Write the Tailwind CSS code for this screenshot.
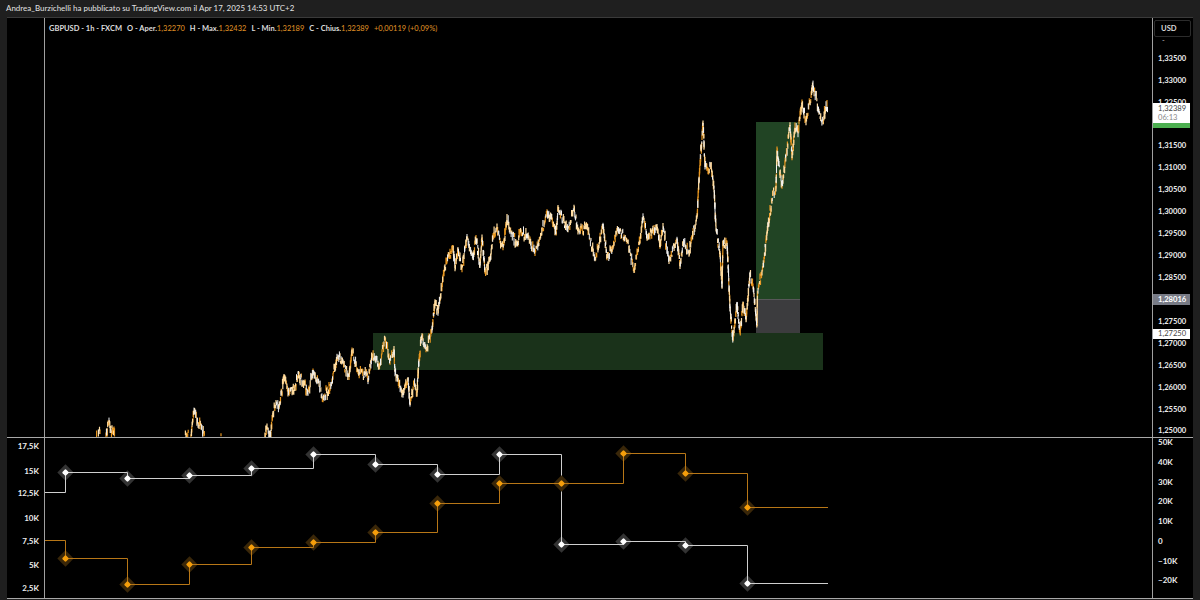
<!DOCTYPE html>
<html lang="en">
<head>
    <meta charset="UTF-8">
    <title>GBPUSD chart</title>
    <script src="https://cdn.jsdelivr.net/npm/@tailwindcss/browser@4"></script>
</head>
<body class="w-[1200px] h-[600px] overflow-hidden bg-[#1f1f1f] font-['Lato',sans-serif] text-[7.6px] text-[#ececec]">
    <!-- publish line -->
    <header class="h-[17px] pl-[6px] flex items-center text-[7.95px] font-medium text-[#dcdcdc]">
        Andrea_Burzichelli ha pubblicato su TradingView.com il Apr 17, 2025 14:53 UTC+2
    </header>

    <main class="mx-[7px] bg-black border-t border-[#3a3a3a]">
        <!-- price pane -->
        <section class="h-[420px] flex border-b border-[#a8a8a8]">
            <div class="w-[38px] border-r border-[#a0a0a0]"></div>
            <div class="relative w-[1107px] h-[419px]">
                <div class="absolute left-[4px] top-[5px] flex gap-[5px] whitespace-nowrap text-[7.5px] font-bold text-[#dcdcdc]">
                    <span>GBPUSD - 1h - FXCM</span>
                    <span>O - Aper.<span class="font-medium text-[#d98a24]">1,32270</span></span>
                    <span>H - Max.<span class="font-medium text-[#d98a24]">1,32432</span></span>
                    <span>L - Min.<span class="font-medium text-[#d98a24]">1,32189</span></span>
                    <span>C - Chius.<span class="font-medium text-[#d98a24]">1,32389</span></span>
                    <span class="font-medium text-[#d98a24]">+0,00119 (+0,09%)</span>
                </div>
                <svg id="priceChart" class="block" width="1107" height="419" viewBox="45 18 1107 419">
                    <rect x="373" y="333" width="450" height="37" fill="#1a321a"></rect>
                    <rect x="756" y="122" width="44" height="177" fill="#214424"></rect>
                    <rect x="756" y="299" width="44" height="34" fill="#3c3c3e"></rect>
                    <rect x="756" y="299" width="44" height="1" fill="#58585a"></rect>
                    <path id="wickOrange" fill="none" stroke="#e8961e" stroke-width="1.2"></path>
                    <path id="wickCream" fill="none" stroke="#ffdca0" stroke-width="1.2"></path>
                    <path id="wickWhite" fill="none" stroke="#f4f4f4" stroke-width="1"></path>
                </svg>
            </div>
            <div class="relative w-[41px] h-[419px] border-l border-[#a0a0a0] overflow-hidden">
                <div class="mt-[2px] ml-[1px] w-[37px] h-[17px] pl-[6px] flex items-center rounded-[2px] border border-[#2c2c2c] text-[#d8d8d8] font-bold">USD</div>
                <div class="h-[10.5px] pl-[9px] leading-[6px] text-[#bbb]">-</div>
                <ul class="pl-[5px] font-bold">
                    <li class="h-[21.93px] flex items-center">1,33500</li>
                    <li class="h-[21.93px] flex items-center">1,33000</li>
                    <li class="h-[21.93px] flex items-center">1,32500</li>
                    <li class="h-[21.93px] flex items-center">1,32000</li>
                    <li class="h-[21.93px] flex items-center">1,31500</li>
                    <li class="h-[21.93px] flex items-center">1,31000</li>
                    <li class="h-[21.93px] flex items-center">1,30500</li>
                    <li class="h-[21.93px] flex items-center">1,30000</li>
                    <li class="h-[21.93px] flex items-center">1,29500</li>
                    <li class="h-[21.93px] flex items-center">1,29000</li>
                    <li class="h-[21.93px] flex items-center">1,28500</li>
                    <li class="h-[21.93px]"></li>
                    <li class="h-[21.93px] flex items-center">1,27500</li>
                    <li class="h-[21.93px] flex items-center">1,27000</li>
                    <li class="h-[21.93px] flex items-center">1,26500</li>
                    <li class="h-[21.93px] flex items-center">1,26000</li>
                    <li class="h-[21.93px] flex items-center">1,25500</li>
                    <li class="h-[21.93px] flex items-center">1,25000</li>
                </ul>
                <!-- price tags -->
                <div class="absolute left-0 top-[85px] w-[37px] h-[25px] bg-[#4caf50]">
                    <div class="h-[20px] bg-white pl-[5px] pt-[1px] leading-[9px] text-[#444]">
                        <div>1,32389</div>
                        <div class="text-[#888]">06:13</div>
                    </div>
                </div>
                <div class="absolute left-0 top-[276px] w-[37px] h-[11px] pl-[5px] flex items-center bg-[#787b86] text-white font-bold">1,28016</div>
                <div class="absolute left-0 top-[310.5px] w-[37px] h-[10px] pl-[5px] flex items-center bg-white text-[#444]">1,27250</div>
            </div>
        </section>

        <!-- volume pane -->
        <section class="h-[161px] flex border-b border-[#a8a8a8]">
            <ul class="w-[38px] border-r border-[#a0a0a0] pr-[5px] text-[8px] font-bold">
                <li class="h-[16px] flex items-center justify-end">17,5K</li>
                <li class="h-[16px] mt-[8.7px] flex items-center justify-end">15K</li>
                <li class="h-[16px] mt-[6.3px] flex items-center justify-end">12,5K</li>
                <li class="h-[16px] mt-[8.7px] flex items-center justify-end">10K</li>
                <li class="h-[16px] mt-[7px] flex items-center justify-end">7,5K</li>
                <li class="h-[16px] mt-[8px] flex items-center justify-end">5K</li>
                <li class="h-[16px] mt-[7px] flex items-center justify-end">2,5K</li>
            </ul>
            <svg id="flowChart" class="block" width="1107" height="160" viewBox="45 438 1107 160"></svg>
            <ul class="w-[41px] border-l border-[#a0a0a0] pl-[5px] text-[8px] font-bold">
                <li class="h-[8px] flex items-center">50K</li>
                <li class="h-[19.75px] flex items-center mt-[6px]">40K</li>
                <li class="h-[19.75px] flex items-center">30K</li>
                <li class="h-[19.75px] flex items-center">20K</li>
                <li class="h-[19.75px] flex items-center">10K</li>
                <li class="h-[19.75px] flex items-center">0</li>
                <li class="h-[19.75px] flex items-center">−10K</li>
                <li class="h-[19.75px] flex items-center">−20K</li>
            </ul>
        </section>
    </main>

    <script>
        // price line, read off the chart in page coordinates
        var pts = [[96,437],[99,431],[101,437],[106,437],[109,421],[111,432],[113,429],[115,437],
            [183,437],[186,435],[191,437],[194,411],[198,424],[202,428],[205,437],[220,437],[221,435],[222,437],
            [265,437],[267,425],[270,437],[273,413],[276,402],[279,408],[284,377],[288,393],[295,388],[298,373],[303,383],[308,393],
            [313,372],[318,380],[323,400],[332,382],[337,357],[343,362],[349,377],[352,350],[358,373],[367,373],[368,382],[372,355],
            [377,360],[379,368],[385,338],[390,362],[394,350],[395,372],[403,395],[408,380],[410,404],[414,383],[417,393],[419,360],
            [422,335],[426,350],[432,330],[435,302],[438,312],[443,278],[447,260],[453,248],[455,270],[458,250],[462,268],[467,238],
            [473,257],[476,238],[480,265],[482,238],[485,272],[490,260],[493,235],[497,228],[503,248],[507,218],[510,230],[518,245],
            [520,230],[530,240],[535,252],[540,238],[547,213],[554,225],[556,233],[558,209],[568,230],[574,207],[578,232],[587,225],
            [595,260],[603,225],[607,257],[613,247],[618,228],[627,240],[634,270],[638,250],[643,217],[647,237],[657,227],[660,245],
            [663,227],[669,260],[677,240],[680,265],[683,243],[689,253],[692,237],[697,217],[699,180],[703,122],[705,165],[708,172],
            [711,165],[714,188],[716,228],[720,253],[722,287],[723,243],[727,242],[730,307],[733,340],[737,303],[740,333],[743,303],
            [746,320],[750,273],[753,287],[757,325],[757.5,293],[763,267],[767,233],[773,193],[776,187],[777,150],[782,187],[790,125],
            [792,158],[795,127],[798,133],[802,103],[806,122],[813,85],[819,112],[823,123],[826,105],[828,107]];

        var seed = 17;
        function rnd() {
            seed = (seed * 16807) % 2147483647;
            return seed / 2147483647;
        }

        var paths = { o: "", c: "", w: "" };
        for (var i = 0; i < pts.length - 1; i++) {
            var a = pts[i], b = pts[i + 1];
            if (a[1] == 437 && b[1] == 437) continue;
            var steps = Math.max(Math.ceil((b[0] - a[0]) / 0.6), Math.ceil(Math.abs(b[1] - a[1]) / 2.5));
            for (var s = 0; s < steps; s++) {
                var x = a[0] + (b[0] - a[0]) * s / steps;
                var y = a[1] + (b[1] - a[1]) * s / steps;
                // keep the tips where they were read, noise only between them
                var mid = Math.min(s, steps - s) / steps;
                y += (rnd() - 0.5) * 9 * Math.min(mid * 3, 1);
                if (y > 436 && a[1] > 425 && b[1] > 425) continue;
                var up = 1 + rnd() * 3.5, down = 1 + rnd() * 3.5;
                var seg = "M" + x.toFixed(1) + " " + (y - up).toFixed(1) + "V" + (y + down).toFixed(1);
                // falling stretches read whiter, rising ones more orange
                var r = rnd();
                var falling = b[1] > a[1];
                if (r < (falling ? 0.22 : 0.42)) paths.o += seg;
                else if (r < (falling ? 0.62 : 0.87)) paths.c += seg;
                else paths.w += seg;
            }
        }
        document.getElementById("wickOrange").setAttribute("d", paths.o);
        document.getElementById("wickCream").setAttribute("d", paths.c);
        document.getElementById("wickWhite").setAttribute("d", paths.w);

        // stepped series with diamond markers
        var xs = [65.5,127.5,189.5,251.5,313.5,375.5,437.5,499.5,561.5,623.5,685.5,747.5];
        var series = [
            { ys: [472.5,478.5,475.5,468.5,454.5,464.5,474.5,454.5,544.5,541.5,545.5,583.5], start: 492.5, line: "#cfcfcf", halo: "#333333", dot: "#ffffff" },
            { ys: [558.5,584.5,564.5,547.5,542.5,532.5,503.5,483.5,483.5,453.5,473.5,507.5], start: 540.5, line: "#b87717", halo: "#3a2709", dot: "#f59e0b" }
        ];
        var flow = document.getElementById("flowChart");
        function add(tag, attrs) {
            var el = document.createElementNS("http://www.w3.org/2000/svg", tag);
            for (var k in attrs) el.setAttribute(k, attrs[k]);
            flow.appendChild(el);
        }
        series.forEach(function (sr) {
            sr.ys.forEach(function (y, i) {
                add("rect", { x: xs[i] - 5.8, y: y - 5.8, width: 11.6, height: 11.6, fill: sr.halo, transform: "rotate(45 " + xs[i] + " " + y + ")" });
            });
            var d = "M44 " + sr.start;
            sr.ys.forEach(function (y, i) { d += "H" + xs[i] + "V" + y; });
            d += "H828";
            add("path", { d: d, fill: "none", stroke: sr.line, "stroke-width": 1 });
            sr.ys.forEach(function (y, i) {
                add("rect", { x: xs[i] - 2.6, y: y - 2.6, width: 5.2, height: 5.2, rx: 1.2, fill: sr.dot, transform: "rotate(45 " + xs[i] + " " + y + ")" });
            });
        });
    </script>
</body>
</html>
